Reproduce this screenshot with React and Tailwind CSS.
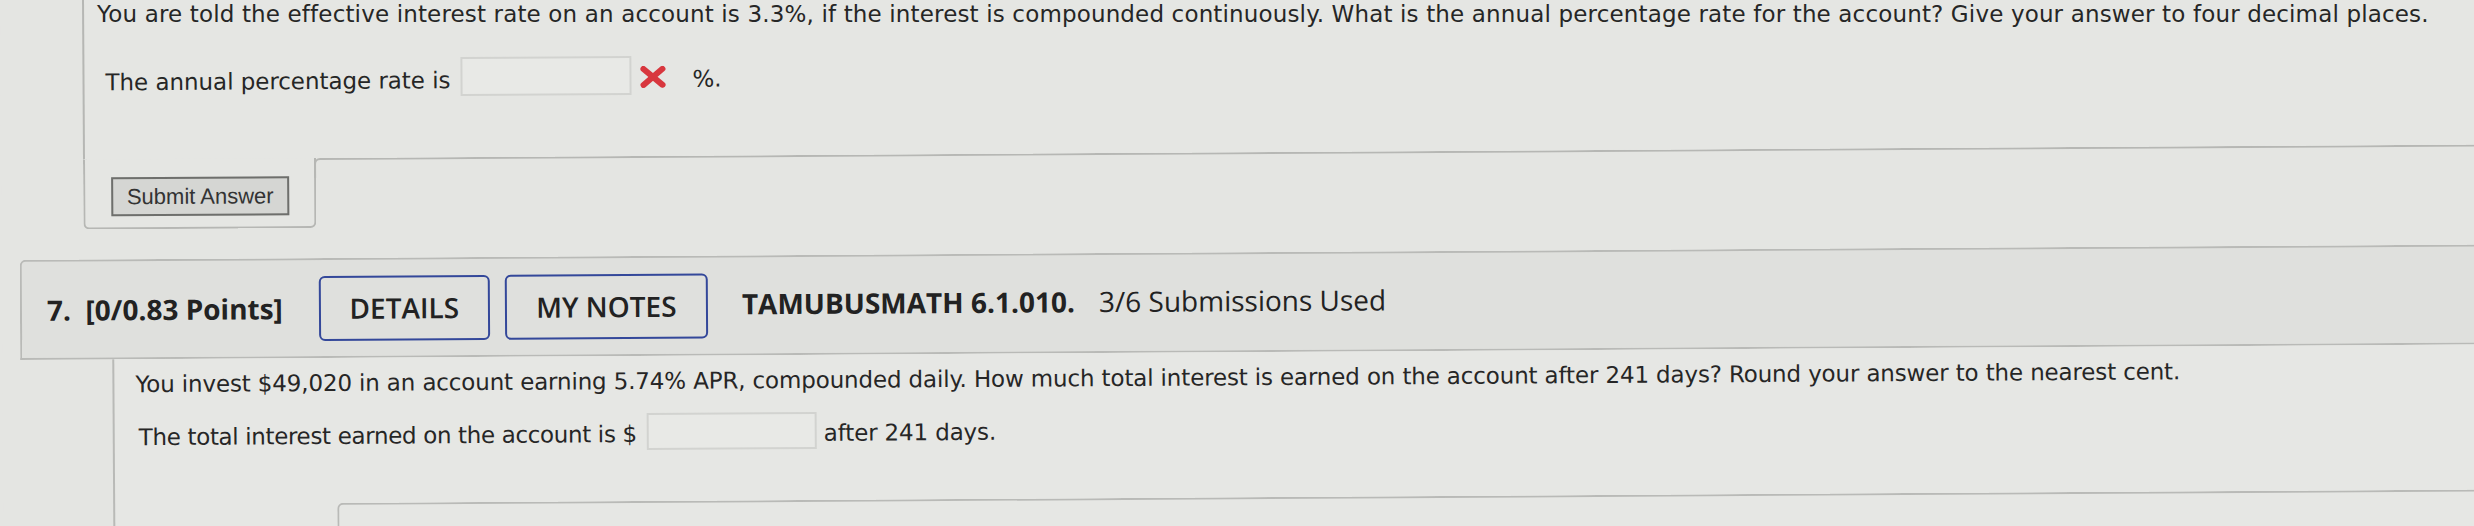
import React from "react";

const body = "font-['DejaVu_Sans',sans-serif] text-[23px] leading-[28px] text-[#262626] whitespace-nowrap";
const head = "font-['Open_Sans',sans-serif] text-[28px] leading-[36px] text-[#222222] whitespace-nowrap";

function RedX() {
  return (
    <svg width="27" height="22" viewBox="0 0 27 22" className="shrink-0">
      <path d="M4 3 L23 19 M23 3 L4 19" stroke="#d8373e" strokeWidth="6" strokeLinecap="round" fill="none" />
    </svg>
  );
}

export default function App() {
  return (
    <div className="w-[2474px] h-[526px] overflow-hidden bg-[#e4e5e2]">
      <div className="w-[2600px] h-[600px] origin-top-left rotate-[-0.36deg] bg-[#e4e5e2] flex flex-col">
        {/* Question 6 (tail) */}
        <div className="ml-[82px] flex flex-col">
          <div className="h-[160px] border-l-2 border-[#b6b7b4] bg-[#e5e6e3] pl-[13px] pt-[1px] flex flex-col">
            <p className={body + " leading-[24px] tracking-[0.15px] origin-left rotate-[0.36deg]"}>
              You are told the effective interest rate on an account is 3.3%, if the interest is compounded continuously. What is the annual percentage rate for the account? Give your answer to four decimal places.
            </p>
            <div className="mt-[31px] ml-[8px] flex items-start h-[39px]">
              <span className={body + " tracking-[-0.05px] mt-[9px]"}>The annual percentage rate is</span>
              <div className="ml-[10px] w-[171px] h-[39px] border-2 border-[#d2d3d0] bg-[#e8e9e6]" />
              <div className="ml-[8px] mt-[10px]"><RedX /></div>
              <span className={body + " mt-[9px] ml-[26px]"}>%.</span>
            </div>
          </div>
          <div className="flex">
            <div className="w-[233px] h-[70px] border-l-2 border-b-2 border-r-2 border-[#b6b7b4] rounded-b-[6px] bg-[#e5e6e3] pl-[26px] pt-[18px]">
              <button className="w-[178px] h-[39px] border-2 border-[#6e6f6c] bg-[#d5d6d3] flex items-center justify-center font-['Liberation_Sans',Arial,sans-serif] text-[22px] text-[#333333] whitespace-nowrap">
                Submit Answer
              </button>
            </div>
            <div className="flex-1 -ml-[2px] border-t-2 border-l-2 border-[#b6b7b4] rounded-tl-[6px] h-[20px]" />
          </div>
        </div>

        {/* Question 7 */}
        <div className="mt-[30px] ml-[18px] flex flex-col">
          <div className="h-[100px] border-t-2 border-l-2 border-b-2 border-[#b9bab7] rounded-tl-[6px] bg-[#dfe0dd] flex items-center pl-[25px]">
            <span className={head + " font-bold"}>7.&nbsp; [0/0.83 Points]</span>
            <div className="ml-[36px] w-[171px] h-[65px] border-2 border-[#34489a] rounded-[6px] flex items-center justify-center">
              <span className={head + " font-semibold text-[#2a3b78]"}>DETAILS</span>
            </div>
            <div className="ml-[15px] w-[203px] h-[65px] border-2 border-[#34489a] rounded-[6px] flex items-center justify-center">
              <span className={head + " font-semibold text-[#2a3b78]"}>MY NOTES</span>
            </div>
            <span className={head + " font-bold ml-[34px] -mt-[4px]"}>TAMUBUSMATH 6.1.010.</span>
            <span className={head + " ml-[24px] -mt-[4px]"}>3/6 Submissions Used</span>
          </div>
          <div className="ml-[92px] h-[200px] border-l-2 border-[#b9bab7] bg-[#e6e7e4] pl-[21px] pt-[11px] flex flex-col">
            <p className={body + " tracking-[-0.15px]"}>
              You invest $49,020 in an account earning 5.74% APR, compounded daily. How much total interest is earned on the account after 241 days? Round your answer to the nearest cent.
            </p>
            <div className="mt-[18px] ml-[3px] flex items-start h-[37px]">
              <span className={body + " tracking-[-0.35px] mt-[7px]"}>The total interest earned on the account is $</span>
              <div className="ml-[10px] w-[170px] h-[37px] border-2 border-[#d2d3d0] bg-[#e8e9e6]" />
              <span className={body + " tracking-[-0.15px] mt-[7px] ml-[7px]"}>after 241 days.</span>
            </div>
            <div className="mt-[51px] ml-[201px] flex-1 border-t-2 border-l-2 border-[#b9bab7] rounded-tl-[6px]" />
          </div>
        </div>
      </div>
    </div>
  );
}
